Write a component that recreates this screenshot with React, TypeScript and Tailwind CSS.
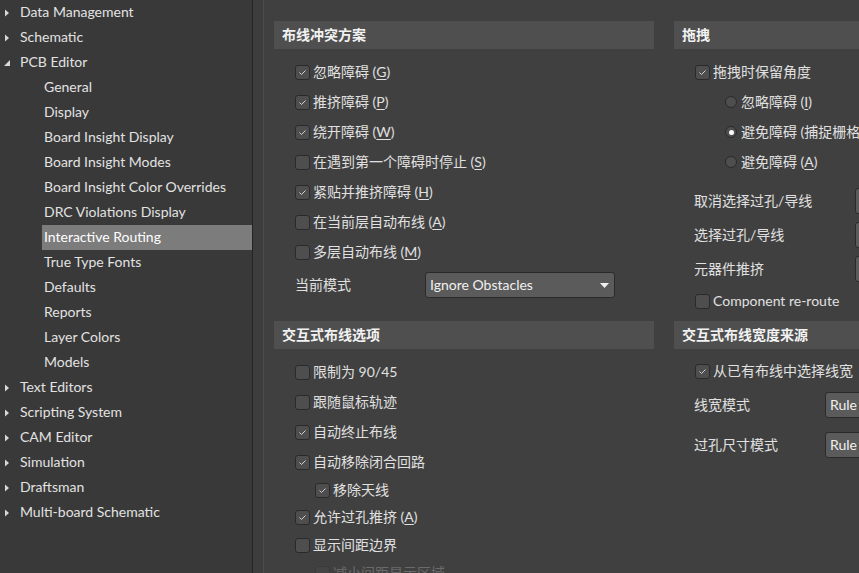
import React from "react";

const Arrow = ({ open }: { open?: boolean }) =>
  open ? (
    <svg width="8" height="8" viewBox="0 0 8 8" className="shrink-0">
      <polygon points="7,1 7,7 1,7" fill="#d8d8d8" />
    </svg>
  ) : (
    <svg width="8" height="8" viewBox="0 0 8 8" className="shrink-0">
      <polygon points="2,0.5 6,4 2,7.5" fill="#d8d8d8" />
    </svg>
  );

const sidebar: { label: string; level: number; arrow?: "open" | "closed"; active?: boolean }[] = [
  { label: "Data Management", level: 0, arrow: "closed" },
  { label: "Schematic", level: 0, arrow: "closed" },
  { label: "PCB Editor", level: 0, arrow: "open" },
  { label: "General", level: 1 },
  { label: "Display", level: 1 },
  { label: "Board Insight Display", level: 1 },
  { label: "Board Insight Modes", level: 1 },
  { label: "Board Insight Color Overrides", level: 1 },
  { label: "DRC Violations Display", level: 1 },
  { label: "Interactive Routing", level: 1, active: true },
  { label: "True Type Fonts", level: 1 },
  { label: "Defaults", level: 1 },
  { label: "Reports", level: 1 },
  { label: "Layer Colors", level: 1 },
  { label: "Models", level: 1 },
  { label: "Text Editors", level: 0, arrow: "closed" },
  { label: "Scripting System", level: 0, arrow: "closed" },
  { label: "CAM Editor", level: 0, arrow: "closed" },
  { label: "Simulation", level: 0, arrow: "closed" },
  { label: "Draftsman", level: 0, arrow: "closed" },
  { label: "Multi-board Schematic", level: 0, arrow: "closed" },
];

const Check = ({ checked, disabled }: { checked?: boolean; disabled?: boolean }) => (
  <div
    className={
      disabled
        ? "w-[15px] h-[15px] rounded-[3px] border border-[#3a3a3a] bg-[#444444] shrink-0"
        : "w-[15px] h-[15px] rounded-[3px] border border-[#2a2a2a] bg-[#4e4e4e] shrink-0 flex items-center justify-center"
    }
  >
    {checked && (
      <svg width="13" height="13" viewBox="0 0 13 13">
        <path d="M3.5 6.5 L5.5 8.5 L9.5 4.5" stroke="#cfcfcf" strokeWidth="1" fill="none" />
      </svg>
    )}
  </div>
);

const Radio = ({ on }: { on?: boolean }) => (
  <div className="w-[12px] h-[12px] rounded-full border border-[#2a2a2a] bg-[#4e4e4e] shrink-0 flex items-center justify-center">
    {on && <div className="w-[5px] h-[5px] rounded-full bg-white" />}
  </div>
);

const U = ({ c }: { c: string }) => <span className="underline underline-offset-2 decoration-1">{c}</span>;

const CheckRow = ({
  checked,
  children,
  h = "h-[30px]",
  indent,
  disabled,
}: {
  checked?: boolean;
  children: React.ReactNode;
  h?: string;
  indent?: boolean;
  disabled?: boolean;
}) => (
  <div className={`${h} shrink-0 flex items-center gap-[3px] ${indent ? "pl-[41px]" : "pl-[21px]"}`}>
    <Check checked={checked} disabled={disabled} />
    <span className={disabled ? "text-[#6a6a6a] whitespace-nowrap" : "text-[#e0e0e0] whitespace-nowrap"}>{children}</span>
  </div>
);

const Header = ({ children }: { children: React.ReactNode }) => (
  <div className="h-[28px] shrink-0 bg-[#4f4f4f] flex items-center pl-[8px] font-bold text-[#f2f2f2] text-[14px]">
    {children}
  </div>
);

const Combo = ({ text, w }: { text: string; w: string }) => (
  <div
    className={`${w} h-[26px] rounded-[3px] border border-[#2a2a2a] bg-[#5b5b5b] flex items-center justify-between pl-[4px] pr-[5px] text-[#f0f0f0] shrink-0`}
  >
    <span>{text}</span>
    <svg width="9" height="5" viewBox="0 0 9 5">
      <polygon points="0,0 9,0 4.5,5" fill="#f0f0f0" />
    </svg>
  </div>
);

const Gap = ({ h }: { h: string }) => <div className={`${h} shrink-0`} />;

export default function App() {
  return (
    <div className="w-[859px] h-[573px] overflow-hidden flex font-['Lato','Noto_Sans_CJK_SC',sans-serif] text-[14px] leading-none">
      {/* Sidebar */}
      <div className="w-[252px] h-full bg-[#393939] shrink-0 flex flex-col">
        {sidebar.map((it, i) => (
          <div
            key={i}
            className={`h-[25px] shrink-0 flex items-center ${it.level === 0 ? "pl-[3px]" : "pl-[42px]"}`}
          >
            {it.level === 0 && (
              <div className="w-[17px] flex items-center">
                <Arrow open={it.arrow === "open"} />
              </div>
            )}
            <div
              className={`h-[25px] pb-[1px] flex items-center flex-1 ${
                it.active ? "bg-[#7c7c7c] pl-[2px] text-white" : it.level === 1 ? "pl-[2px] text-[#e2e2e2]" : "text-[#e2e2e2]"
              }`}
            >
              {it.label}
            </div>
          </div>
        ))}
      </div>
      {/* Divider */}
      <div className="w-[1px] h-full bg-[#242424] shrink-0" />
      <div className="w-[10px] h-full bg-[#3d3d3d] shrink-0" />
      <div className="w-[1px] h-full bg-[#4b4b4b] shrink-0" />
      {/* Main */}
      <div className="flex-1 h-full bg-[#404040] pt-[21px] pl-[10px] flex gap-[20px] overflow-hidden">
        {/* Left column */}
        <div className="w-[380px] shrink-0 flex flex-col">
          <Header>布线冲突方案</Header>
          <Gap h="h-[8px]" />
          <CheckRow checked>
            忽略障碍 (<U c="G" />)
          </CheckRow>
          <CheckRow checked>
            推挤障碍 (<U c="P" />)
          </CheckRow>
          <CheckRow checked>
            绕开障碍 (<U c="W" />)
          </CheckRow>
          <CheckRow>
            在遇到第一个障碍时停止 (<U c="S" />)
          </CheckRow>
          <CheckRow checked>
            紧贴并推挤障碍 (<U c="H" />)
          </CheckRow>
          <CheckRow>
            在当前层自动布线 (<U c="A" />)
          </CheckRow>
          <CheckRow>
            多层自动布线 (<U c="M" />)
          </CheckRow>
          <Gap h="h-[3px]" />
          <div className="h-[30px] shrink-0 flex items-center pl-[21px]">
            <span className="w-[130px] text-[#e0e0e0]">当前模式</span>
            <Combo text="Ignore Obstacles" w="w-[190px]" />
          </div>
          <Gap h="h-[21px]" />
          <Header>交互式布线选项</Header>
          <Gap h="h-[8px]" />
          <CheckRow>限制为 90/45</CheckRow>
          <CheckRow>跟随鼠标轨迹</CheckRow>
          <CheckRow checked>自动终止布线</CheckRow>
          <CheckRow checked>自动移除闭合回路</CheckRow>
          <CheckRow checked indent h="h-[26px]">
            移除天线
          </CheckRow>
          <CheckRow checked h="h-[28px]">
            允许过孔推挤 (<U c="A" />)
          </CheckRow>
          <CheckRow h="h-[28px]">显示间距边界</CheckRow>
          <CheckRow indent disabled h="h-[28px]">
            减小间距显示区域
          </CheckRow>
        </div>
        {/* Right column */}
        <div className="w-[380px] shrink-0 flex flex-col">
          <Header>拖拽</Header>
          <Gap h="h-[8px]" />
          <CheckRow checked>拖拽时保留角度</CheckRow>
          {[
            { on: false, t: <>忽略障碍 (<U c="I" />)</> },
            { on: true, t: <>避免障碍 (捕捉栅格)</> },
            { on: false, t: <>避免障碍 (<U c="A" />)</> },
          ].map((r, i) => (
            <div key={i} className="h-[30px] shrink-0 flex items-center gap-[4px] pl-[51px]">
              <Radio on={r.on} />
              <span className="text-[#e0e0e0] whitespace-nowrap">{r.t}</span>
            </div>
          ))}
          <Gap h="h-[7px]" />
          {["取消选择过孔/导线", "选择过孔/导线", "元器件推挤"].map((t, i) => (
            <div key={i} className="h-[34px] shrink-0 flex items-center pl-[20px]">
              <span className="w-[161px] text-[#e0e0e0] shrink-0">{t}</span>
              <Combo text="" w="w-[120px]" />
            </div>
          ))}
          <CheckRow h="h-[30px]">Component re-route</CheckRow>
          <Gap h="h-[5px]" />
          <Header>交互式布线宽度来源</Header>
          <Gap h="h-[8px]" />
          <CheckRow checked h="h-[28px]">从已有布线中选择线宽</CheckRow>
          <div className="h-[40px] shrink-0 flex items-center pl-[20px]">
            <span className="w-[131px] text-[#e0e0e0] shrink-0">线宽模式</span>
            <Combo text="Rule" w="w-[120px]" />
          </div>
          <div className="h-[40px] shrink-0 flex items-center pl-[20px]">
            <span className="w-[131px] text-[#e0e0e0] shrink-0">过孔尺寸模式</span>
            <Combo text="Rule" w="w-[120px]" />
          </div>
        </div>
      </div>
    </div>
  );
}
